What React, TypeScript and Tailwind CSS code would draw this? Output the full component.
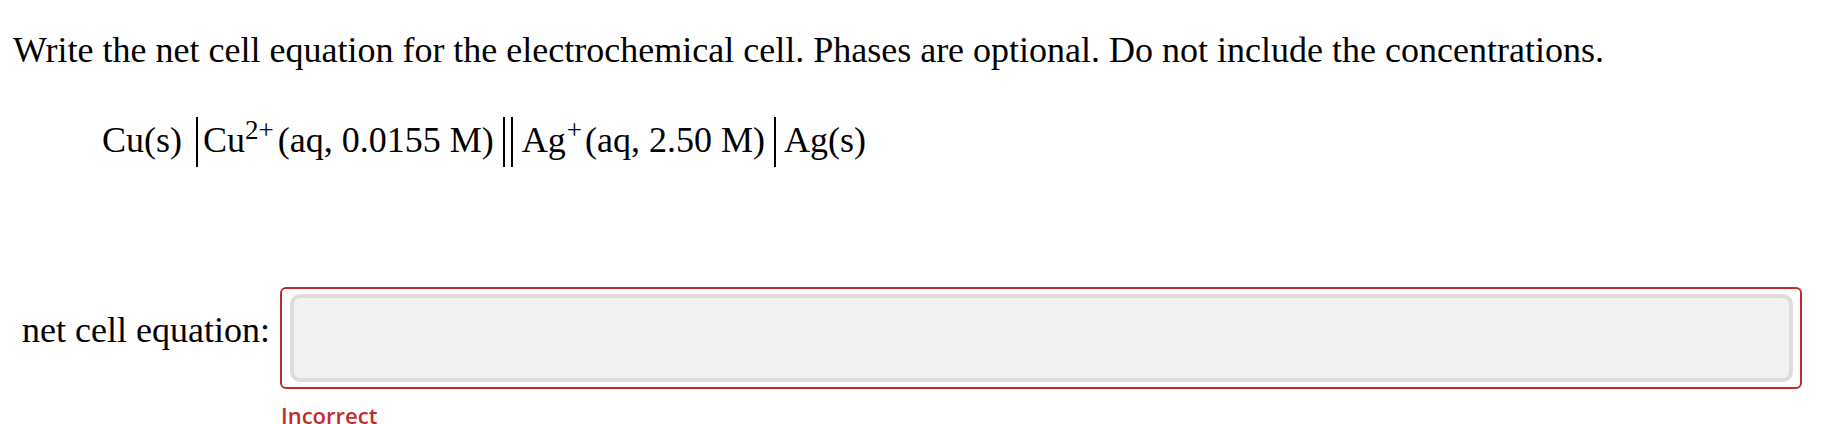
import React from 'react';

const Bar: React.FC<{ className?: string }> = ({ className = '' }) => (
  <span className={`inline-block w-[2px] h-[50px] bg-black align-[-15px] ${className}`} />
);

const Sup: React.FC<{ children: React.ReactNode; className?: string }> = ({ children, className = '' }) => (
  <span className={`text-[27px] leading-none align-[13px] ${className}`}>{children}</span>
);

export default function App() {
  return (
    <div className="w-full h-[424px] overflow-hidden bg-white text-black font-['Liberation_Serif','Times_New_Roman',serif]">
      {/* Question prompt */}
      <p className="pt-[30px] pl-[13px] text-[36px] leading-[40px] whitespace-nowrap">
        Write the net cell equation for the electrochemical cell. Phases are optional. Do not include the concentrations.
      </p>

      {/* Cell notation */}
      <div className="mt-[47px] pl-[102px] text-[36px] leading-[40px] whitespace-nowrap">
        <span>Cu(s)</span>
        <Bar className="ml-[14px] mr-[5px]" />
        <span>Cu</span>
        <Sup className="mr-[4px]">2+</Sup>
        <span>(aq, 0.0155 M)</span>
        <Bar className="ml-[9px]" />
        <Bar className="ml-[6px] mr-[9px]" />
        <span>Ag</span>
        <Sup className="ml-[1px] mr-[3px]">+</Sup>
        <span>(aq, 2.50 M)</span>
        <Bar className="ml-[9px] mr-[8px]" />
        <span>Ag(s)</span>
      </div>

      {/* Answer row */}
      <div className="mt-[120px] pl-[22px] flex items-start">
        <label className="mt-[23px] w-[248px] shrink-0 text-[36px] leading-[40px] whitespace-nowrap">
          net cell equation:
        </label>
        <div className="ml-[10px] w-[1522px] h-[102px] shrink-0 border-2 border-[#c22b2b] rounded-[6px] pt-[5px] pb-[5px] pl-[8px] pr-[7px]">
          <div className="w-full h-full rounded-[10px] border-[4px] border-[#dddddd] bg-[#f2f2f2]" />
        </div>
      </div>

      <div className="mt-[11px] pl-[281px] text-[22px] leading-[30px] font-semibold text-[#c22b2b] font-['Open_Sans','Liberation_Sans',sans-serif]">
        Incorrect
      </div>
    </div>
  );
}
